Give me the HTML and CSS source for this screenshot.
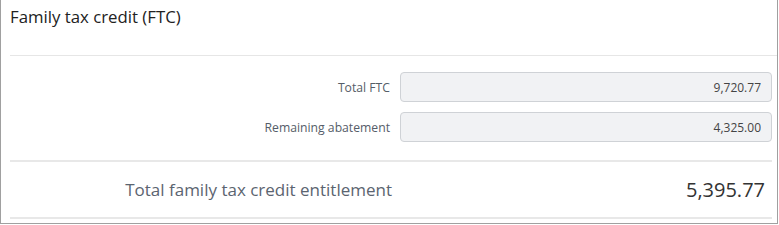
FILE: index.html
```html
<!DOCTYPE html>
<html lang="en">
<head>
  <meta charset="UTF-8">
  <title>Family tax credit</title>
  <link rel="stylesheet" href="styles.css">
</head>
<body>
  <div class="panel">
    <div class="panel-head">
      <h2>Family tax credit (FTC)</h2>
    </div>

    <div class="panel-body">
      <div class="row">
        <label for="totalFtc">Total FTC</label>
        <input type="text" id="totalFtc" value="9,720.77" readonly />
      </div>
      <div class="row">
        <label for="abatement">Remaining abatement</label>
        <input type="text" id="abatement" value="4,325.00" readonly />
      </div>

      <div class="total">
        <span class="total-label">Total family tax credit entitlement</span>
        <span class="total-value">5,395.77</span>
      </div>
    </div>
  </div>
</body>
</html>
```

FILE: styles.css
```css
body {
  margin: 0;
  font-family: "Segoe UI", "Open Sans", sans-serif;
  background: white;
}
.panel {
  width: 778px;
  height: 224px;
  box-sizing: border-box;
  border: 1px solid #a0a0a0;
  border-top: none;
}
.panel-head {
  margin-left: 9px;
  height: 55px;
  border-bottom: 1px solid #e6e6e6;
}
.panel-head h2 {
  margin: 0;
  padding-top: 5px;
  font-size: 16.8px;
  font-weight: normal;
  color: #222;
}
.panel-body {
  padding: 16px 5px 0 9px;
}
.row {
  display: flex;
  align-items: center;
  margin-bottom: 10px;
}
.row label {
  width: 380px;
  padding-right: 10px;
  text-align: right;
  font-size: 12.2px;
  color: #555d68;
}
.row input {
  flex: 1;
  height: 30px;
  box-sizing: border-box;
  padding: 0 10px;
  border: 1px solid #cfd2d6;
  border-radius: 4px;
  background: #f1f2f4;
  text-align: right;
  font-family: inherit;
  font-size: 12px;
  color: #444;
}
.total {
  display: flex;
  align-items: center;
  justify-content: space-between;
  height: 55px;
  margin-top: 18px;
  border-top: 2px solid #e8e8e8;
  border-bottom: 2px solid #e8e8e8;
}
.total-label {
  width: 382px;
  text-align: right;
  font-size: 17px;
  color: #5b6470;
}
.total-value {
  padding-right: 7px;
  font-size: 20px;
  color: #333;
}
```
